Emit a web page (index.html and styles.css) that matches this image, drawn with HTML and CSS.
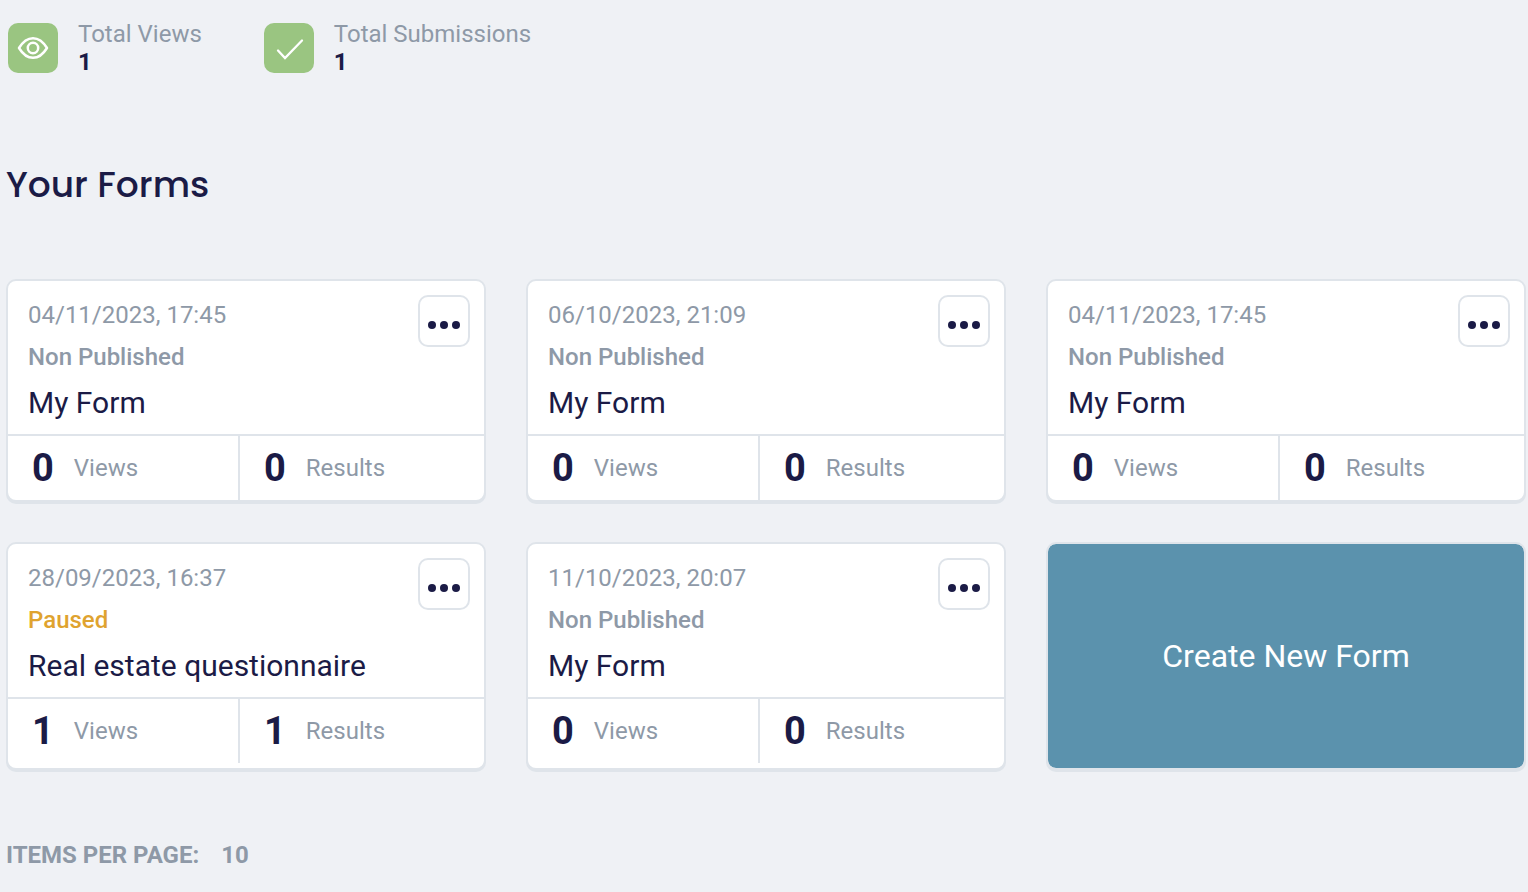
FILE: index.html
```html
<!DOCTYPE html>
<html lang="en">
  <head>
    <meta charset="UTF-8" />
    <meta name="viewport" content="width=device-width, initial-scale=1.0" />
    <title>Your Forms</title>
    <link rel="stylesheet" href="styles.css">
  </head>
  <body>
    <!-- Totals -->
    <div class="totals">
      <div class="total">
        <span class="total-icon">
          <svg width="32" height="32" viewBox="0 0 32 32" fill="none" stroke="#fff" stroke-width="2.500">
            <path d="M2 16C6 9.500 10.500 6.200 16 6.200S26 9.500 30 16C26 22.500 21.500 25.800 16 25.800S6 22.500 2 16Z" stroke-linejoin="round" />
            <circle cx="16" cy="16" r="5.200" />
          </svg>
        </span>
        <div>
          <div class="total-label">Total Views</div>
          <div class="total-value">1</div>
        </div>
      </div>
      <div class="total">
        <span class="total-icon">
          <svg width="32" height="32" viewBox="0 0 32 32" fill="none" stroke="#fff" stroke-width="2.300">
            <path d="M5 18.500L12 26L29 8.500" stroke-linecap="round" stroke-linejoin="miter" />
          </svg>
        </span>
        <div>
          <div class="total-label">Total Submissions</div>
          <div class="total-value">1</div>
        </div>
      </div>
    </div>

    <h1>Your Forms</h1>

    <!-- Forms list -->
    <div class="forms">
      <div class="card">
        <div class="card-top">
          <div>
            <div class="date">04/11/2023, 17:45</div>
            <div class="status">Non Published</div>
            <h2>My Form</h2>
          </div>
          <button type="button" class="menu-btn" aria-label="Form menu">
            <span class="dot"></span><span class="dot"></span><span class="dot"></span>
          </button>
        </div>
        <div class="stats">
          <div class="stat"><span class="count">0</span> Views</div>
          <div class="stat"><span class="count">0</span> Results</div>
        </div>
      </div>

      <div class="card">
        <div class="card-top">
          <div>
            <div class="date">06/10/2023, 21:09</div>
            <div class="status">Non Published</div>
            <h2>My Form</h2>
          </div>
          <button type="button" class="menu-btn" aria-label="Form menu">
            <span class="dot"></span><span class="dot"></span><span class="dot"></span>
          </button>
        </div>
        <div class="stats">
          <div class="stat"><span class="count">0</span> Views</div>
          <div class="stat"><span class="count">0</span> Results</div>
        </div>
      </div>

      <div class="card">
        <div class="card-top">
          <div>
            <div class="date">04/11/2023, 17:45</div>
            <div class="status">Non Published</div>
            <h2>My Form</h2>
          </div>
          <button type="button" class="menu-btn" aria-label="Form menu">
            <span class="dot"></span><span class="dot"></span><span class="dot"></span>
          </button>
        </div>
        <div class="stats">
          <div class="stat"><span class="count">0</span> Views</div>
          <div class="stat"><span class="count">0</span> Results</div>
        </div>
      </div>

      <div class="card">
        <div class="card-top">
          <div>
            <div class="date">28/09/2023, 16:37</div>
            <div class="status paused">Paused</div>
            <h2>Real estate questionnaire</h2>
          </div>
          <button type="button" class="menu-btn" aria-label="Form menu">
            <span class="dot"></span><span class="dot"></span><span class="dot"></span>
          </button>
        </div>
        <div class="stats">
          <div class="stat"><span class="count">1</span> Views</div>
          <div class="stat"><span class="count">1</span> Results</div>
        </div>
      </div>

      <div class="card">
        <div class="card-top">
          <div>
            <div class="date">11/10/2023, 20:07</div>
            <div class="status">Non Published</div>
            <h2>My Form</h2>
          </div>
          <button type="button" class="menu-btn" aria-label="Form menu">
            <span class="dot"></span><span class="dot"></span><span class="dot"></span>
          </button>
        </div>
        <div class="stats">
          <div class="stat"><span class="count">0</span> Views</div>
          <div class="stat"><span class="count">0</span> Results</div>
        </div>
      </div>

      <button type="button" class="card create-btn">Create New Form</button>
    </div>

    <!-- Paging -->
    <div class="paging">
      <label for="perPage">ITEMS PER PAGE:</label>
      <select id="perPage">
        <option>10</option>
        <option>20</option>
        <option>50</option>
      </select>
    </div>
  </body>
</html>
```
FILE: styles.css
```css
* {
  box-sizing: border-box;
}
body {
  margin: 0;
  padding: 20px 2px 20px 6px;
  background-color: #eff1f5;
  color: #1b1b46;
  font-family: Roboto, sans-serif;
  font-size: 24px;
  line-height: 28px;
}
.totals {
  display: flex;
  gap: 62px;
  padding-left: 2px;
}
.total {
  display: flex;
  gap: 20px;
}
.total-icon {
  display: flex;
  align-items: center;
  justify-content: center;
  width: 50px;
  height: 50px;
  margin-top: 3px;
  border-radius: 10px;
  background-color: #9ac581;
}
.total-label {
  color: #8e99a7;
}
.total-value {
  font-weight: bold;
}
h1 {
  margin: 84px 0 69px;
  font-family: Poppins, Inter, sans-serif;
  font-size: 36px;
  font-weight: 500;
  line-height: 50px;
}
.forms {
  display: grid;
  grid-template-columns: repeat(3, 1fr);
  gap: 40px;
}
.card {
  border: 2px solid #dfe4ea;
  border-radius: 10px;
  background-color: #fff;
  box-shadow: 0 2px 0 #dfe4ea;
}
.card-top {
  display: flex;
  justify-content: space-between;
  padding: 14px 14px 13px 20px;
  border-bottom: 2px solid #dfe4ea;
}
.date {
  margin-top: 6px;
  color: #8e99a7;
}
.status {
  margin-top: 14px;
  color: #8e99a7;
  font-weight: 500;
}
.status.paused {
  color: #dfa32f;
}
h2 {
  margin: 14px 0 0;
  font-size: 30px;
  font-weight: normal;
  line-height: 36px;
}
.menu-btn {
  display: flex;
  align-items: center;
  justify-content: center;
  gap: 4px;
  width: 52px;
  height: 52px;
  padding: 8px 0 0;
  border: 2px solid #dfe4ea;
  border-radius: 10px;
  background-color: #fff;
  cursor: pointer;
}
.dot {
  width: 8px;
  height: 8px;
  border-radius: 50%;
  background-color: #1b1b46;
}
.stats {
  display: grid;
  grid-template-columns: 232px 1fr;
}
.stat {
  display: flex;
  align-items: center;
  gap: 20px;
  height: 64px;
  padding-left: 24px;
  color: #8e99a7;
}
.stat:first-child {
  border-right: 2px solid #dfe4ea;
}
.count {
  color: #1b1b46;
  font-size: 38px;
  font-weight: bold;
}
.create-btn {
  min-height: 228px;
  background-color: #5b92ad;
  background-clip: padding-box;
  color: #fff;
  font-family: inherit;
  font-size: 32px;
  cursor: pointer;
}
.paging {
  display: flex;
  gap: 22px;
  margin-top: 71px;
  color: #8e99a7;
  font-weight: bold;
}
.paging select {
  padding: 0;
  border: none;
  background: none;
  color: inherit;
  font: inherit;
  appearance: none;
}
```
